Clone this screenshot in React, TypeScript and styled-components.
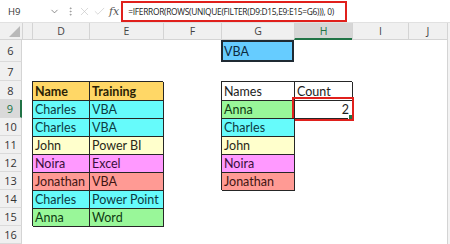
import React from "react";
import styled, { createGlobalStyle } from "styled-components";
import { ChevronDown, EllipsisVertical, X, Check } from "lucide-react";

const GlobalStyle = createGlobalStyle`
  html, body { margin: 0; padding: 0; background: #fff; }
  body { font-family: Lato, "Liberation Sans", sans-serif; }
`;

type Fill = "gold" | "cyan" | "cream" | "pink" | "salmon" | "green" | "sky" | "white";

const fills: Record<Fill, string> = {
  gold: "#ffd766",
  cyan: "#66fbfb",
  cream: "#ffffcc",
  pink: "#ff99ff",
  salmon: "#ff9a94",
  green: "#99f799",
  sky: "#66ccff",
  white: "#ffffff",
};

const inks: Record<Fill, string> = {
  gold: "#2a1f05",
  cyan: "#0c3a42",
  cream: "#2a2818",
  pink: "#3a0f3a",
  salmon: "#3e1512",
  green: "#0f3a12",
  sky: "#0c2a3e",
  white: "#1c1c1c",
};

const COLS = [22, 10, 57, 74, 58, 73, 58, 56, 39];
const LETTERS = ["", "C", "D", "E", "F", "G", "H", "I", "J"];
const ROW_HEIGHTS: Record<number, number> = { 6: 22, 7: 19, 8: 19 };

type CellData = { text?: string; fill?: Fill; bold?: boolean; right?: boolean; thick?: boolean; mark?: boolean };

// keyed by row, then column letter
const cells: Record<number, Record<string, CellData>> = {
  6: { G: { text: "VBA", fill: "sky", thick: true } },
  8: {
    D: { text: "Name", fill: "gold", bold: true },
    E: { text: "Training", fill: "gold", bold: true },
    G: { text: "Names", fill: "white" },
    H: { text: "Count", fill: "white" },
  },
  9: {
    D: { text: "Charles", fill: "cyan" },
    E: { text: "VBA", fill: "cyan" },
    G: { text: "Anna", fill: "green" },
    H: { text: "2", fill: "white", right: true, mark: true },
  },
  10: { D: { text: "Charles", fill: "cyan" }, E: { text: "VBA", fill: "cyan" }, G: { text: "Charles", fill: "cyan" } },
  11: { D: { text: "John", fill: "cream" }, E: { text: "Power BI", fill: "cream" }, G: { text: "John", fill: "cream" } },
  12: { D: { text: "Noira", fill: "pink" }, E: { text: "Excel", fill: "pink" }, G: { text: "Noira", fill: "pink" } },
  13: { D: { text: "Jonathan", fill: "salmon" }, E: { text: "VBA", fill: "salmon" }, G: { text: "Jonathan", fill: "salmon" } },
  14: { D: { text: "Charles", fill: "cyan" }, E: { text: "Power Point", fill: "cyan" } },
  15: { D: { text: "Anna", fill: "green" }, E: { text: "Word", fill: "green" } },
  16: {},
};

const ROWS = [6, 7, 8, 9, 10, 11, 12, 13, 14, 15, 16];

export default function App() {
  return (
    <>
      <GlobalStyle />
      <Frame>
        <FormulaBar>
          <NameBox>
            <span>H9</span>
            <ChevronDown size={11} strokeWidth={1.6} />
          </NameBox>
          <Divider>
            <EllipsisVertical size={11} strokeWidth={2} />
          </Divider>
          <BarIcons>
            <X size={13} strokeWidth={1.2} />
            <Check size={13} strokeWidth={1.2} />
            <Fx>fx</Fx>
          </BarIcons>
          <FormulaField>
            <FormulaBox>=IFERROR(ROWS(UNIQUE(FILTER(D9:D15,E9:E15=G6))), 0)</FormulaBox>
          </FormulaField>
        </FormulaBar>
        <Sheet>
          <Corner>
            <Triangle />
          </Corner>
          {LETTERS.slice(1).map((l) => (
            <ColHead key={l} $active={l === "H"}>
              {l !== "C" ? l : ""}
            </ColHead>
          ))}
          {ROWS.map((r) => (
            <React.Fragment key={r}>
              <RowHead $active={r === 9} $h={ROW_HEIGHTS[r] ?? 18}>
                {r}
              </RowHead>
              {LETTERS.slice(1).map((l) => {
                const c = cells[r]?.[l];
                if (!c) return <Cell key={l} />;
                return (
                  <Cell key={l} $fill={c.fill} $boxed $bold={c.bold} $right={c.right} $thick={c.thick}>
                    {c.text}
                    {c.mark && (
                      <>
                        <FillHandle />
                        <Mark />
                      </>
                    )}
                  </Cell>
                );
              })}
            </React.Fragment>
          ))}
        </Sheet>
      </Frame>
    </>
  );
}

const Frame = styled.div`
  width: 450px;
  height: 244px;
  overflow: hidden;
  background: #f3f3f3;
  display: flex;
  flex-direction: column;
`;

const FormulaBar = styled.div`
  height: 23px;
  display: flex;
  align-items: center;
  background: #fff;
  border-bottom: 1px solid #e1e1e1;
  box-sizing: border-box;
  padding-left: 3px;
`;

const NameBox = styled.div`
  width: 60px;
  height: 17px;
  box-sizing: border-box;
  display: flex;
  align-items: center;
  justify-content: space-between;
  padding: 0 3px 0 5px;
  font-family: "Open Sans", sans-serif;
  font-size: 9.5px;
  color: #333;
  svg {
    color: #666;
  }
`;

const Divider = styled.div`
  width: 14px;
  display: flex;
  justify-content: center;
  color: #9a9a9a;
`;

const BarIcons = styled.div`
  display: flex;
  align-items: center;
  gap: 1px;
  color: #c4c4c4;
  svg {
    margin: 0 0 0 1px;
  }
`;

const Fx = styled.span`
  font-family: "DejaVu Serif", "Liberation Serif", serif;
  font-style: italic;
  font-size: 11px;
  color: #555;
  margin: 0 0 0 2px;
`;

const FormulaField = styled.div`
  flex: 1;
  height: 23px;
  display: flex;
  align-items: center;
  padding-left: 2px;
`;

const FormulaBox = styled.div`
  width: 226px;
  height: 21px;
  box-sizing: border-box;
  border: 2px solid #e0201c;
  display: flex;
  align-items: center;
  padding-left: 5px;
  font-family: "Open Sans", sans-serif;
  font-size: 8.4px;
  letter-spacing: -0.3px;
  color: #222;
  white-space: nowrap;
  overflow: hidden;
`;

const Sheet = styled.div`
  display: grid;
  grid-template-columns: ${COLS.map((w) => `${w}px`).join(" ")};
  grid-template-rows: 17px;
  width: 447px;
  border-right: 1px solid #d4d4d4;
  background: #fff;
`;

const Corner = styled.div`
  background: #f0f0f0;
  border-bottom: 1px solid #d4d4d4;
  position: relative;
`;

const Triangle = styled.div`
  position: absolute;
  right: 2px;
  bottom: 2px;
  width: 0;
  height: 0;
  border-left: 11px solid transparent;
  border-bottom: 11px solid #b9b9b9;
`;

const ColHead = styled.div<{ $active?: boolean }>`
  background: ${(p) => (p.$active ? "#d6d6d6" : "#f0f0f0")};
  border-left: 1px solid #d4d4d4;
  border-bottom: ${(p) => (p.$active ? "2px solid #217346" : "1px solid #d4d4d4")};
  box-sizing: border-box;
  display: flex;
  align-items: center;
  justify-content: center;
  font-family: "Open Sans", sans-serif;
  font-size: 10.5px;
  color: ${(p) => (p.$active ? "#217346" : "#444")};
`;

const RowHead = styled.div<{ $active?: boolean; $h: number }>`
  height: ${(p) => p.$h}px;
  background: ${(p) => (p.$active ? "#d9d9d9" : "#f0f0f0")};
  border-bottom: 1px solid #dadada;
  border-right: ${(p) => (p.$active ? "2px solid #217346" : "1px solid #d4d4d4")};
  box-sizing: border-box;
  display: flex;
  align-items: center;
  justify-content: center;
  font-family: "Open Sans", sans-serif;
  font-size: 11px;
  color: ${(p) => (p.$active ? "#217346" : "#333")};
`;

const Cell = styled.div<{ $fill?: Fill; $boxed?: boolean; $bold?: boolean; $right?: boolean; $thick?: boolean }>`
  position: relative;
  display: flex;
  align-items: center;
  justify-content: ${(p) => (p.$right ? "flex-end" : "flex-start")};
  padding: 1px 3px 0 3px;
  box-sizing: border-box;
  white-space: nowrap;
  font-family: Lato, "Liberation Sans", sans-serif;
  font-size: 12.5px;
  font-weight: ${(p) => (p.$bold ? 700 : 400)};
  background: ${(p) => (p.$fill ? fills[p.$fill] : "transparent")};
  color: ${(p) => (p.$fill ? inks[p.$fill] : "#1c1c1c")};
  box-shadow: ${(p) =>
    p.$thick
      ? "inset 0 0 0 2px #1f2a33"
      : p.$boxed
        ? "inset 1px 1px 0 #262626, 1px 1px 0 #262626"
        : "none"};
`;

const FillHandle = styled.span`
  position: absolute;
  right: -2px;
  bottom: -2px;
  width: 4px;
  height: 4px;
  background: #217346;
  border: 1px solid #fff;
`;

const Mark = styled.span`
  position: absolute;
  top: -3px;
  left: -2px;
  right: -2px;
  bottom: -3px;
  border: 2px solid #e0201c;
  pointer-events: none;
`;
